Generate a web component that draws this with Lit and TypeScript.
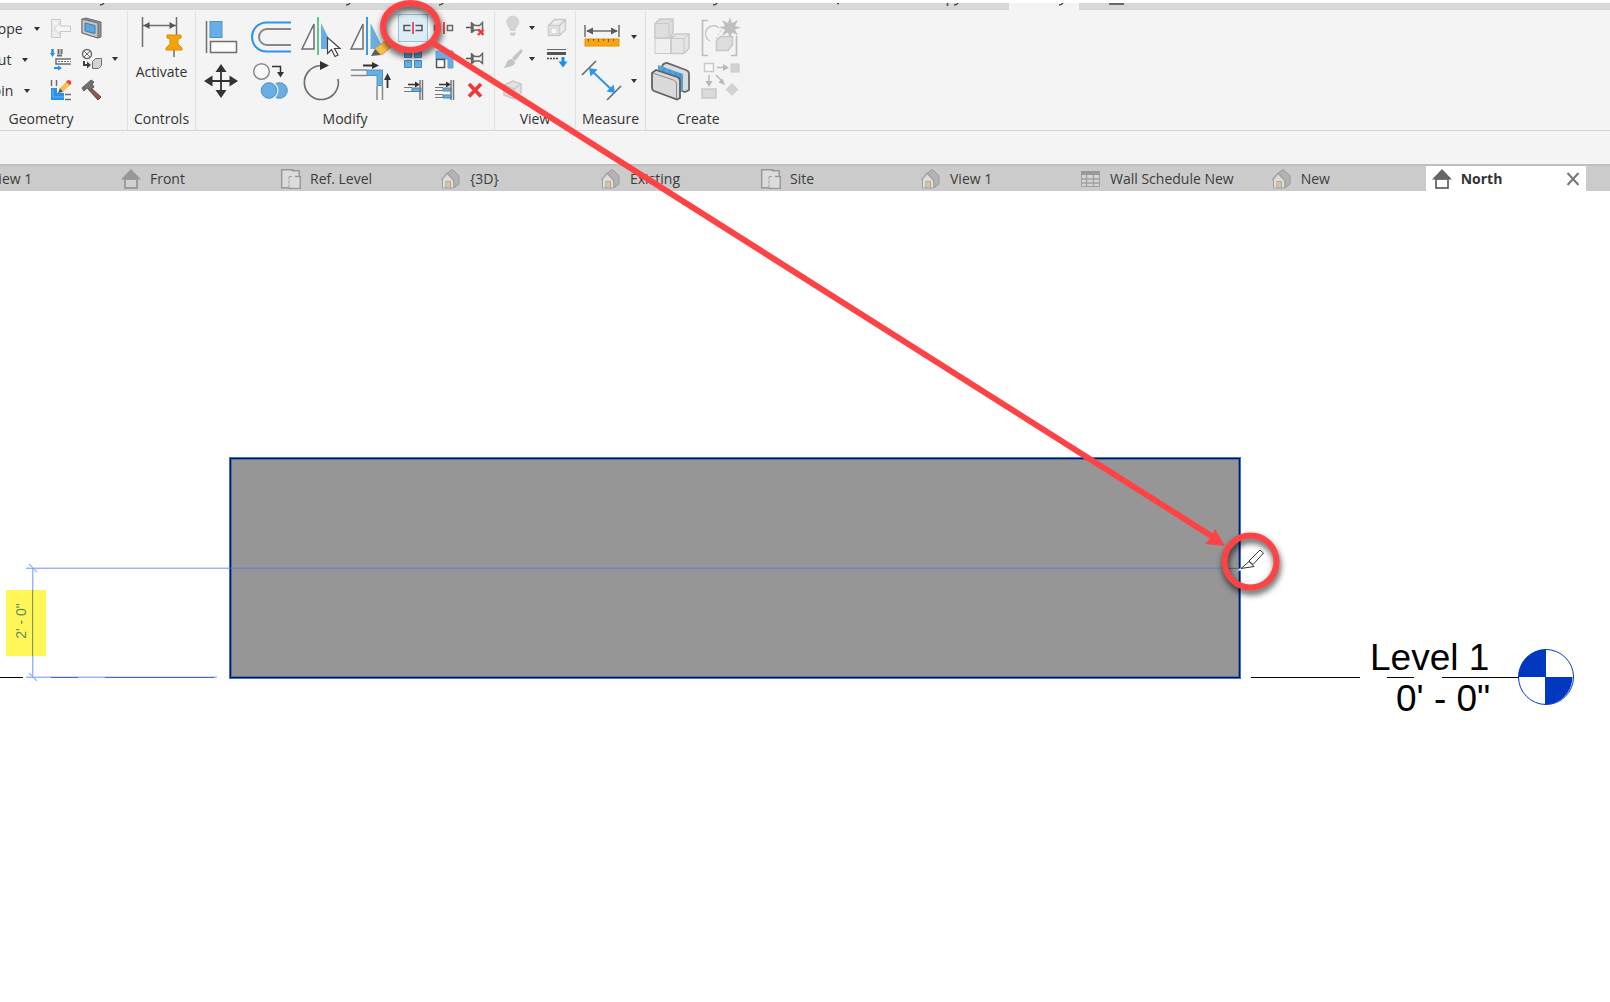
import { LitElement, html, svg, css } from "lit";
import { customElement, property } from "lit/decorators.js";

const G = "#6e6e6e";
const D = "#404040";
const B = "#68aee2";
const R = "#e3262b";
const L = "#c9c9c9";
const LF = "#dedede";

// Toolbar icons: 22x22 for small tools, 40x40 for large ones.
const icons: Record<string, unknown> = {
  cope: svg`<path d="M1.500 2.500h9v5M1.500 2.500v18h9v-5" fill="#ececec" stroke="${L}"/><path d="M4 11.500l6-6v3.500h10.500v5.500h-10.500v3z" fill="#f6f6f6" stroke="${L}"/>`,
  wall: svg`<path d="M1 2l4-1 15 4v15l-3 1-16-5z" fill="#8f8f8f" stroke="${G}"/><path d="M1 2l16 4v15l-16-5z" fill="#c4c4c4" stroke="${G}"/><path d="M4 6l10 2.500v8l-10-2.500z" fill="#59a6e4" stroke="#487ba3"/>`,
  beam: svg`<path d="M2.500 1v6M8.500 1v5M11.500 1v5M7 7.500h5" stroke="${G}" stroke-width="2" fill="none"/><path d="M0 5l2.500 4 2.500-4z" fill="#2090ee"/><path d="M2.500 1v5" stroke="#2090ee" stroke-width="2"/><path d="M21 11H6v5h15" fill="#fff" stroke="${G}" stroke-width="1.500"/><path d="M8 13.500h13" stroke="${G}" stroke-dasharray="2 1"/><path d="M4 20h5" stroke="#2090ee" stroke-width="2"/><path d="M8 17.500l4 2.500-4 2.500z" fill="#2090ee"/>`,
  split: svg`<circle cx="6" cy="6" r="4.500" fill="none" stroke="${G}" stroke-width="1.500"/><path d="M3 3l6 6M9 3l-6 6" stroke="${G}"/><path d="M3 13v4h4" fill="none" stroke="${D}" stroke-width="2"/><path d="M6 13.500l4 3.500-4 3.500z" fill="${D}"/><path d="M11.500 20.500v-7l3-3h6v7l-3 3z" fill="#d4d4d4" stroke="${G}"/>`,
  joinwall: svg`<path d="M1 9h6v5h7v7H1z" fill="#2292ea"/><path d="M3 10v8h11" fill="none" stroke="#66b8f7"/><path d="M1.500 1v6M6.500 1v6M15 15.500h6M15 20.500h6" stroke="${G}" stroke-width="1.500"/><path d="M10 9l7-7 4 3-8 8z" fill="#f6c14b"/><path d="M16 3l2-2q4 0 3 4l-1 1z" fill="#ee4343"/><path d="M10 9l3 4-5 1z" fill="#555"/>`,
  demolish: svg`<path d="M9 8l11 10-3 3L7 10z" fill="#93584c" stroke="#754238"/><path d="M1 9L10 1l3 2-2 2 2 3-4 3-3-2-3 3z" fill="#717171" stroke="#5a5a5a"/>`,
  activate: svg`<path d="M3.500 0v30M37.500 0v18" stroke="${G}" stroke-width="1.500"/><path d="M4 8.500h33" stroke="${G}" stroke-width="1.500"/><path d="M4.500 8.500l6-3.500v7zM36.500 8.500l-6-3.500v7z" fill="#555"/><path d="M35 33v7" stroke="${G}" stroke-width="1.500"/><path d="M28 18h14v3l-3 1v5l4 4v2H27v-2l4-4v-5l-3-1z" fill="#f5a20b" stroke="#db8c00"/>`,
  align: svg`<path d="M5.500 4v32" stroke="${G}" stroke-width="1.500"/><rect x="9" y="4.500" width="12" height="16" fill="${B}" stroke="#4a92cc"/><rect x="9.500" y="24.500" width="26" height="11" fill="#fafafa" stroke="${G}" stroke-width="1.500"/>`,
  offset: svg`<path d="M40 5.500H15.500a14.500 14.500 0 0 0 0 29H40" fill="none" stroke="#2d96ed" stroke-width="2"/><path d="M40 12H16a8 8 0 0 0 0 16h24" fill="none" stroke="#878787" stroke-width="2"/>`,
  mirror: svg`<path d="M13 7v25H1z" fill="#f8f8f8" stroke="${G}" stroke-width="1.500"/><path d="M17 0v38" stroke="#63c58a" stroke-width="2"/><path d="M20 6v26h13z" fill="${B}"/><path d="M26.500 20.500v16l4-4 3.500 7 3-1.500-3.500-6.500h5.500z" fill="#fff" stroke="#444" stroke-width="1.200"/>`,
  mirrordraw: svg`<path d="M12 7v25H0z" fill="#f8f8f8" stroke="${G}" stroke-width="1.500"/><path d="M16 0v38" stroke="#4099df" stroke-width="2"/><path d="M19.500 6v26h13z" fill="${B}"/><path d="M24 32l10-8 6 6-9 8z" fill="#fac046" stroke="#e4a62d"/><path d="M24 32l6 6-10 1z" fill="#606060"/>`,
  move: svg`<path d="M20 7v26M7 20h26" stroke="#333" stroke-width="1.800"/><path d="M20 3l5.500 8h-11zM20 37l5.500-8h-11zM3 20l8.500-5.500v11zM37 20l-8.500-5.500v11z" fill="#333"/>`,
  copy: svg`<circle cx="10.500" cy="10.500" r="7.800" fill="#f8f8f8" stroke="#888" stroke-width="1.500"/><path d="M21 5.500h8.500v7" fill="none" stroke="#333" stroke-width="1.500"/><path d="M26 11h7l-3.500 5.500z" fill="#333"/><circle cx="28.500" cy="29.500" r="7.800" fill="${B}" stroke="#4a92cc"/><circle cx="18" cy="29.500" r="8.500" fill="${B}" stroke="#f4f4f4" stroke-width="2"/><circle cx="18" cy="29.500" r="7.800" fill="${B}" stroke="#4a92cc"/>`,
  rotate: svg`<path d="M37 18A17 17 0 1 1 20 4.500" fill="none" stroke="${G}" stroke-width="1.700"/><path d="M19 0l9 4.500-9 4.500z" fill="#333"/>`,
  trim: svg`<path d="M0 9h16M0 14.500h16M26 25v14M31.500 25v14" stroke="#888" stroke-width="1.500"/><path d="M16 9h15.500v15.500H26v-10H16z" fill="${B}" stroke="#4a92cc"/><path d="M12 4.500h10M36.500 27v-9" stroke="#333" stroke-width="1.800"/><path d="M21 1l7 3.500-7 3.500zM33 19l3.500-7 3.500 7z" fill="#333"/>`,
  splitel: svg`<path d="M8.500 8.500H2v5h6.500M13.500 8.500H20v5h-6.500" fill="none" stroke="#555" stroke-width="1.500"/><path d="M11 5v12" stroke="${R}" stroke-width="1.500"/>`,
  splitgap: svg`<path d="M1.500 8.500h5v5h-5zM14.500 8.500h5v5h-5z" fill="none" stroke="#666" stroke-width="1.500"/><path d="M11 5v12" stroke="${R}" stroke-width="1.500"/>`,
  unpin: svg`<path d="M2 10.500h5" stroke="#555" stroke-width="1.500"/><path d="M7.500 5v11M9 7l2 1.500h4.500L18.500 5.500v10L15.500 13H11l-2 1.500z" fill="#f4f4f4" stroke="#666" stroke-width="1.500"/><path d="M14 12.500l5.500 5.500M19.500 12.500L14 18" stroke="#ef3b3f" stroke-width="2.400"/>`,
  array: svg`<path d="M2.500 2.500h7v7h-7zM12.500 2.500h7v7h-7zM2.500 12.500h7v7h-7zM12.500 12.500h7v7h-7z" fill="${B}" stroke="#4589bd"/>`,
  scale: svg`<path d="M3 3h17v17h-5v-9H3z" fill="${B}" stroke="#5c9fd2"/><rect x="3.500" y="11.500" width="8" height="8" fill="#fff" stroke="#555" stroke-width="1.500"/>`,
  pin: svg`<path d="M2 10.500h5" stroke="#555" stroke-width="1.500"/><path d="M7.500 5v11M9 7l2 1.500h4.500L18.500 5.500v10L15.500 13H11l-2 1.500z" fill="#f4f4f4" stroke="#666" stroke-width="1.500"/>`,
  trimone: svg`<path d="M6 5.500h8" stroke="#333" stroke-width="1.500"/><path d="M13 2.500l5 3-5 3z" fill="#333"/><path d="M2 8.500h8M2 12.500h8" stroke="#777"/><path d="M10 9h9v3.500h-9z" fill="${B}" stroke="#4589bd"/><path d="M18 1v20M20.500 1v20" stroke="#777" stroke-width="1.500"/>`,
  trimmany: svg`<path d="M6 5.500h8" stroke="#333" stroke-width="1.500"/><path d="M13 2.500l5 3-5 3z" fill="#333"/><path d="M2 8.500h8M2 11.500h8M2 15.500h8M2 18.500h8" stroke="#777" stroke-width="1.200"/><path d="M10 9h8v3h-8zM10 16h8v3h-8z" fill="${B}" stroke="#4589bd"/><path d="M18 1v20M20.500 1v20" stroke="#777" stroke-width="1.500"/>`,
  del: svg`<path d="M5 5l12 12.500M17 5L5 17.500" stroke="#f0373a" stroke-width="3.600"/>`,
  bulb: svg`<path d="M8 14q0-2-2-4.500a6.500 6.500 0 1 1 9.500 0q-2 2.500-2 4.500z" fill="#d4d4d4"/><path d="M8 15.500h5.500v2q-2.700 3-5.500 0z" fill="#cfcfcf"/>`,
  box: svg`<path d="M2.500 8.500l6-6h11v10l-6 6h-11zM2.500 8.500h11v10M13.500 8.500l6-6" fill="#ececec" stroke="${L}" stroke-width="1.500"/><path d="M5 11h6v6H5z" fill="#f8f8f8" stroke="${L}"/>`,
  brush: svg`<path d="M11 10l8-8 1 1-7 9z" fill="#c6c6c6" stroke="#c6c6c6" stroke-width="1.500"/><path d="M10 11l3 3c0 4-6 5.500-12 6 3-2 3-4 4-6s3-3 5-3z" fill="#c4c4c4"/>`,
  lines: svg`<path d="M1 1.500h19" stroke="#666"/><path d="M1 5.500h19" stroke="#555" stroke-width="3"/><path d="M1 10.500h12" stroke="#444" stroke-width="1.500" stroke-dasharray="2 1"/><path d="M17 9v6" stroke="#1b8df0" stroke-width="3"/><path d="M12.500 13.500h9L17 19.500z" fill="#1b8df0"/>`,
  cube: svg`<path d="M2 6l9-4 8 3v9l-7 6-10-4z" fill="#e2e2e2" stroke="${L}" stroke-width="1.500"/><path d="M2 6l10 4 7-5M12 10v10" fill="none" stroke="${L}" stroke-width="1.500"/><path d="M5 9l5 2v6l-5-2z" fill="#f4f4f4" stroke="${L}"/>`,
  measure: svg`<path d="M3 8v12M37 8v12" stroke="${G}" stroke-width="1.500"/><path d="M5 14h30" stroke="${G}" stroke-width="1.500"/><path d="M4 14l7-3.500v7zM36 14l-7-3.500v7z" fill="#5c5c5c"/><rect x="3" y="22" width="34" height="7" fill="#f9a50e" stroke="#e29100"/><path d="M6.500 22v3M11.500 22v2M16.500 22v3M21.500 22v2M26.500 22v3M31.500 22v2" stroke="#77581e"/>`,
  aligned: svg`<path d="M0 14L14 0M25 39l14-14" stroke="${G}" stroke-width="1.700"/><path d="M10 10l21 20" stroke="#2d96ed" stroke-width="2"/><path d="M7 7l8.500 1.500-7 7zM33 32l-8.500-1.500 7-7z" fill="#2d96ed"/>`,
  group: svg`<path d="M4 21.500h16v15H4zM20 21.500h13v15H20z" fill="#f0f0f0" stroke="${L}"/><path d="M4 6.500l5-4.500h13v14l-3 5H4z" fill="${LF}" stroke="${L}" stroke-width="1.500"/><path d="M4 6.500h14v15M18 6.500l4-4.500" fill="none" stroke="${L}"/><path d="M20 21.500l5-4.500h13v14l-5 5.500H20z" fill="#e6e6e6" stroke="${L}" stroke-width="1.500"/><path d="M20 21.500h13v15M33 21.500l5-4.500" fill="none" stroke="${L}"/>`,
  similar: svg`<path d="M7 3.500H1.500v35H7M30 38.500h5.500V19" fill="none" stroke="#bdbdbd" stroke-width="1.700"/><path d="M18 11a8 8 0 1 0-9 13" fill="none" stroke="#c6c6c6" stroke-width="1.500"/><path d="M20 13l-5 9" stroke="${L}" stroke-dasharray="2 2"/><path d="M15.500 23.500l4-4h12v8l-4.500 6H15.500z" fill="${LF}" stroke="#c6c6c6" stroke-width="1.500"/><path d="M29 0l2 6 6-3-3 6 6 1.500-6 2 3 6-6-3-2 6-2-6-6 3 3-6-6-2 6-1.500-3-6 6 3z" fill="#bfbfbf"/>`,
  assembly: svg`<path d="M11 7q0-5 5-5l19 7q3 1 3 4v16l-4 2-23-8z" fill="#dcdcdc" stroke="#666" stroke-width="1.800"/><path d="M7 4l25 9v18L7 22z" fill="#4fa4dd"/><path d="M13 6.500v18M19 9v18M25 11v18M29 12v18" stroke="#318bc9"/><path d="M1 12l4-3 21 7q3 1 3 4v17l-3 1.500L3 30q-2-1-2-3z" fill="#dadada" stroke="#616161" stroke-width="1.800"/><path d="M1.500 12l21 7q3 1 3 4v15" fill="none" stroke="#8a8a8a"/>`,
  parts: svg`<rect x="3.500" y="2.500" width="9" height="8" fill="#f8f8f8" stroke="${L}" stroke-width="1.500"/><rect x="30" y="3" width="8" height="8" fill="#d2d2d2" stroke="${L}"/><rect x="1" y="28" width="14" height="9" fill="#dadada" stroke="${L}" stroke-width="1.500"/><path d="M31 22l6.500 6.500L31 35l-6.500-6.500z" fill="#d2d2d2"/><path d="M16 6.500h7M8 14v7M15 14l6 6" stroke="#b9b9b9" stroke-width="1.500"/><path d="M22 3l6 3.500-6 3.500zM4.500 20h7L8 26zM24 24l-6.500-2.500 4-4z" fill="#b9b9b9"/>`,
};

// 20x20 icons for the kinds of view that a tab can show.
const viewIcons: Record<string, unknown> = {
  elevation: svg`<path d="M10 0l10 10.500H0z" fill="var(--ink)"/><rect x="4" y="10" width="12" height="9" fill="var(--paper)" stroke="var(--ink)" stroke-width="1.800"/>`,
  plan: svg`<path d="M.700.700h11v1h6.500v17H.700z" fill="#dcdcdc"/><path d="M8 18.700H.700V.700h11v1h6.500v5" fill="none" stroke="#979797" stroke-width="1.400"/><path d="M8 7.500h11.300v12H8z" fill="#dcdcdc"/><path d="M8 7.500h4M8 7.500v11" fill="none" stroke="#a0a0a0" stroke-dasharray="3 1"/><path d="M14 7.500h5.300v12H7.500" fill="none" stroke="#979797" stroke-width="1.400"/>`,
  house: svg`<path d="M1.500 10l5-6 6.500 7.500V19H1.500z" fill="#dcdcdc" stroke="#a3a3a3"/><path d="M6 4.500L11 .500l7 6v8.500L13 19v-7.500z" fill="#b3b3b3" stroke="#9a9a9a"/><path d="M0 11l6.500-7 6.500 8" fill="none" stroke="#a5a5a5" stroke-width="1.500"/><path d="M5 19v-6.500h4.500V19z" fill="#e0c68c" stroke="#a8a8a8"/>`,
  schedule: svg`<rect x=".500" y="2.500" width="18" height="15" fill="#d4d4d4" stroke="#a0a0a0"/><path d="M0 2h19v4H0z" fill="#999"/><path d="M0 10h19M0 14h19M5.500 6v12M12.500 6v12" stroke="#a0a0a0" stroke-width="1.300"/>`,
};

@customElement("tool-button")
class ToolButton extends LitElement {
  @property() icon = "";
  @property() name = "";
  @property({ type: Number }) size = 22;
  @property({ type: Boolean, reflect: true }) selected = false;
  static styles = css`
    :host { display: grid; place-items: center; }
    button {
      display: grid; place-items: center; padding: 2px 3px; margin: 0;
      border: 1px solid transparent; background: none;
    }
    :host([selected]) button { background: #deedf5; border-color: #8fc3e2; }
    .big { padding: 0; border: 0; }
    svg { display: block; overflow: visible; }
  `;
  render() {
    return html`<button class=${this.size > 22 ? "big" : ""} aria-label=${this.name}>
      <svg width=${this.size} height=${this.size} viewBox="0 0 ${this.size} ${this.size}" aria-hidden="true">${icons[this.icon]}</svg>
    </button>`;
  }
}

@customElement("caret-button")
class CaretButton extends LitElement {
  @property() name = "";
  static styles = css`
    :host { display: grid; align-items: center; }
    button { display: block; padding: 4px 1px; margin: 0; border: 0; background: none; }
    svg { display: block; }
  `;
  render() {
    return html`<button aria-label=${this.name}><svg width="6" height="4" viewBox="0 0 6 4" aria-hidden="true"><path d="M0 0h6L3 4z" fill="#333"/></svg></button>`;
  }
}

@customElement("app-ribbon")
class AppRibbon extends LitElement {
  static styles = css`
    :host {
      display: flex; background: #f4f4f4; padding-top: 1px;
      border-bottom: 1px solid #d6d6d6; overflow: hidden;
    }
    .panel { display: flex; flex-direction: column; border-right: 1px solid #e0e0e0; }
    .panel:last-child { border-right: 0; }
    .body { display: flex; padding-top: 1px; min-height: 93px; }
    h2 { margin: 0; padding-top: 2px; font-size: 14px; font-weight: 400; line-height: 23px; text-align: center; }
    .small { display: grid; grid-auto-rows: 31px; }
    .large { display: grid; grid-auto-rows: 44px; padding-top: 3px; }
    .geometry { margin-left: -45px; }
    .geometry .body { padding-left: 34px; padding-right: 5px; }
    .labels { grid-template-columns: 56px; }
    .geo { grid-template-columns: 31px 31px 15px; }
    .geo caret-button { padding-left: 4px; }
    .text {
      display: flex; align-items: center; gap: 11px; padding: 2px 0 0; border: 0; background: none;
      font: inherit; color: inherit;
    }
    .activate {
      display: flex; flex-direction: column; align-items: center; gap: 5px; padding: 5px 7px 0;
      border: 0; background: none; font: inherit; line-height: 20px; color: inherit;
    }
    .activate svg { display: block; overflow: visible; }
    .controls { min-width: 67px; }
    .controls .body { justify-content: center; }
    .four { grid-template-columns: repeat(4, 50px); }
    .three { grid-template-columns: repeat(3, 31px); }
    .modify .body { gap: 1px; padding-right: 4px; }
    .view .body { padding-left: 2px; padding-right: 3px; }
    .views { grid-template-columns: 31px 13px 31px; }
    .measure .body { padding-left: 6px; padding-right: 7px; }
    .measures { grid-template-columns: 40px 8px; column-gap: 8px; }
    .create .body { padding-right: 4px; }
    .two { grid-template-columns: 50px 50px; }
  `;
  tool(icon: string, name: string, size = 22, selected = false) {
    return html`<tool-button icon=${icon} name=${name} size=${size} ?selected=${selected}></tool-button>`;
  }
  label(text: string) {
    return html`<button class="text">${text}<svg width="6" height="4" viewBox="0 0 6 4" aria-hidden="true"><path d="M0 0h6L3 4z" fill="#333"/></svg></button>`;
  }
  render() {
    const t = this.tool;
    return html`
      <section class="panel geometry">
        <div class="body">
          <div class="small labels">${["Cope", "Cut", "Join"].map(this.label)}</div>
          <div class="small geo">
            ${t("cope", "Cope")}${t("wall", "Wall opening")}<span></span>
            ${t("beam", "Beam joins")}${t("split", "Split face")}<caret-button name="Split options"></caret-button>
            ${t("joinwall", "Wall joins")}${t("demolish", "Demolish")}
          </div>
        </div>
        <h2>Geometry</h2>
      </section>
      <section class="panel controls">
        <div class="body">
          <button class="activate">
            <svg width="42" height="40" viewBox="2 0 42 40" aria-hidden="true">${icons.activate}</svg>Activate
          </button>
        </div>
        <h2>Controls</h2>
      </section>
      <section class="panel modify">
        <div class="body">
          <div class="large four">
            ${t("align", "Align", 40)}${t("offset", "Offset", 40)}${t("mirror", "Mirror by axis", 40)}${t("mirrordraw", "Mirror by drawn axis", 40)}
            ${t("move", "Move", 40)}${t("copy", "Copy", 40)}${t("rotate", "Rotate", 40)}${t("trim", "Trim to corner", 40)}
          </div>
          <div class="small three">
            ${t("splitel", "Split element", 22, true)}${t("splitgap", "Split with gap")}${t("unpin", "Unpin")}
            ${t("array", "Array")}${t("scale", "Scale")}${t("pin", "Pin")}
            ${t("trimone", "Extend one")}${t("trimmany", "Extend several")}${t("del", "Delete")}
          </div>
        </div>
        <h2>Modify</h2>
      </section>
      <section class="panel view">
        <div class="body">
          <div class="small views">
            ${t("bulb", "Hide")}<caret-button name="Hide options"></caret-button>${t("box", "Selection box")}
            ${t("brush", "Override")}<caret-button name="Override options"></caret-button>${t("lines", "Linework")}
            ${t("cube", "Displace")}
          </div>
        </div>
        <h2>View</h2>
      </section>
      <section class="panel measure">
        <div class="body">
          <div class="large measures">
            ${t("measure", "Measure", 40)}<caret-button name="Measure options"></caret-button>
            ${t("aligned", "Aligned dimension", 40)}<caret-button name="Dimension options"></caret-button>
          </div>
        </div>
        <h2>Measure</h2>
      </section>
      <section class="panel create">
        <div class="body">
          <div class="large two">
            ${t("group", "Create group", 40)}${t("similar", "Create similar", 40)}
            ${t("assembly", "Create assembly", 40)}${t("parts", "Create parts", 40)}
          </div>
        </div>
        <h2>Create</h2>
      </section>
    `;
  }
}

interface ViewTab { icon: string; title: string; active?: boolean; }

@customElement("view-tabs")
class ViewTabs extends LitElement {
  static styles = css`
    :host {
      display: flex; background: #cbcbcb; border-top: 2px solid #bfbfbf; overflow: hidden;
      --ink: #979797; --paper: #d0d0d0;
    }
    .tab { display: flex; flex: none; align-items: center; min-width: 160px; box-sizing: border-box; }
    .first { margin-left: -45px; }
    .open {
      display: flex; align-items: center; gap: 9px; flex: 1; padding: 0 32px 0 6px; border: 0;
      background: none; font: inherit; line-height: 25px; color: #3c3c3c; white-space: nowrap;
    }
    .open svg { display: block; margin-top: 1px; }
    .active { background: #fff; --ink: #666; --paper: #fff; }
    .active .open { font-weight: 700; color: #333; padding-right: 0; }
    .close { display: block; border: 0; background: none; padding: 4px 6px; }
    .close svg { display: block; }
  `;
  tabs: ViewTab[] = [
    { icon: "house", title: "View 1" },
    { icon: "elevation", title: "Front" },
    { icon: "plan", title: "Ref. Level" },
    { icon: "house", title: "{3D}" },
    { icon: "house", title: "Existing" },
    { icon: "plan", title: "Site" },
    { icon: "house", title: "View 1" },
    { icon: "schedule", title: "Wall Schedule New" },
    { icon: "house", title: "New" },
    { icon: "elevation", title: "North", active: true },
  ];
  render() {
    return this.tabs.map((tab, i) => html`
      <div class="tab ${i === 0 ? "first" : ""} ${tab.active ? "active" : ""}">
        <button class="open">
          <svg width="20" height="20" viewBox="0 0 20 20" aria-hidden="true">${viewIcons[tab.icon]}</svg>${tab.title}
        </button>
        ${tab.active ? html`<button class="close" aria-label="Close">
          <svg width="14" height="14" viewBox="0 0 14 14" aria-hidden="true"><path d="M1.500 1l11 12M12.500 1l-11 12" stroke="#777" stroke-width="2"/></svg>
        </button>` : ""}
      </div>`);
  }
}

@customElement("drawing-view")
class DrawingView extends LitElement {
  static styles = css`
    :host { display: block; background: #fff; }
    svg { display: block; width: 100%; height: auto; }
    .wall { fill: #969696; stroke: #4a6fc0; stroke-width: 3; }
    .edge { fill: none; stroke: #001a5c; stroke-width: 1; }
    .halo { stroke: #4477ff; stroke-opacity: 0.25; stroke-width: 2; fill: none; }
    .dim { stroke: #4477ff; stroke-opacity: 0.4; stroke-width: 1; fill: none; }
    .dark { stroke: #4868b8; stroke-width: 1; }
    .level { stroke: #000; stroke-width: 1; }
    .note { font: 14px "Liberation Sans", Arial, sans-serif; fill: #5f8a62; text-anchor: middle; }
    .mark { fill: #fff300; fill-opacity: 0.66; }
    .over { stroke: #7f9a4a; stroke-width: 1; }
    .name { font: 37px "Liberation Sans", Arial, sans-serif; fill: #000; }
    .blue { fill: #0039bf; }
    .ring { fill: none; stroke: #0039bf; stroke-width: 1; }
  `;
  render() {
    return html`<svg viewBox="0 191 1610 811" role="img" aria-label="North elevation">
      <rect class="wall" x="230.500" y="458.500" width="1009" height="219"/>
      <rect class="edge" x="230.500" y="458.500" width="1009" height="219"/>
      <path class="halo" d="M26 568H1239M33 568v109M26 677H217M29 564l8 8M29 673l8 8"/>
      <path class="dim" d="M26 568.500H1239M32.500 568v109M26 677.500H217M29 564l8 8M29 673l8 8"/>
      <path class="dark" d="M51 677.500h27M105 677.500h109"/>
      <path class="level" d="M0 677.500h23M1251 677.500h109M1387 677.500h27M1442 677.500h77"/>
      <rect class="mark" x="6" y="590" width="40" height="66"/>
      <path class="over" d="M32.500 590v66"/>
      <text class="note" transform="translate(26 621) rotate(-90)">2' - 0"</text>
      <text class="name" x="1370" y="670">Level 1</text>
      <text class="name" x="1396" y="711">0' - 0"</text>
      <circle class="ring" cx="1546" cy="677" r="27.500"/>
      <path class="blue" d="M1546 677v-27.500a27.500 27.500 0 0 0-27.500 27.500zM1545 677v27.500a27.500 27.500 0 0 0 27.500-27.500z"/>
      <path d="M1228 568.500h13" stroke="#666"/>
      <path d="M1237 570.500l5-3-1 3z" fill="#fff"/>
      <path d="M1241 568.500l8-7 5 5zM1249 561l11-11 3.500 3-10.500 11.500z" fill="#fff" stroke="#333"/>
    </svg>`;
  }
}

@customElement("app-root")
class AppRoot extends LitElement {
  static styles = css`
    :host {
      display: block; position: relative; min-height: 100vh; background: #fff; overflow: hidden;
      font: 14px "Open Sans", "Noto Sans", sans-serif; color: #333;
    }
    .strip { background: #d8d8d8; border-top: 3px solid #fff; height: 7px; }
    .strip svg { display: block; width: 100%; height: 7px; }
    .options { height: 33px; background: #f4f4f4; }
    .callout { position: absolute; inset: 0 0 auto 0; width: 100%; height: auto; pointer-events: none; }
    .circle { fill: none; stroke: #fd4345; stroke-width: 6; filter: drop-shadow(1px 4px 3px rgba(0, 0, 0, 0.7)); }
    .line { stroke: #fd4345; stroke-width: 6; }
    .head { fill: #fd4345; }
  `;
  render() {
    return html`
      <div class="strip">
        <svg viewBox="0 0 1610 7" preserveAspectRatio="none" aria-hidden="true">
          <path d="M1009 0h70v7h-70z" fill="#f4f4f4"/>
          <path d="M104 0q-1 2-4 2M350 0q-1 2-4 2M443 0q-1 2-4 2M717 0q-1 2-4 2M837 .500h2M947.500 0v3M958 0q-1 2-4 2M1063 0q-1 2-4 2M1109 1h15" fill="none" stroke="#444" stroke-width="1.500"/>
        </svg>
      </div>
      <app-ribbon></app-ribbon>
      <div class="options"></div>
      <view-tabs></view-tabs>
      <drawing-view></drawing-view>
      <svg class="callout" viewBox="0 0 1610 1002" aria-hidden="true">
        <ellipse class="circle" cx="410.500" cy="26.500" rx="27.500" ry="23.500"/>
        <path class="line" d="M433 43L1213 537"/>
        <path class="head" d="M1225 546l-10-17-3 7-7 8z"/>
        <circle class="circle" cx="1250.500" cy="561.500" r="26"/>
      </svg>
    `;
  }
}
